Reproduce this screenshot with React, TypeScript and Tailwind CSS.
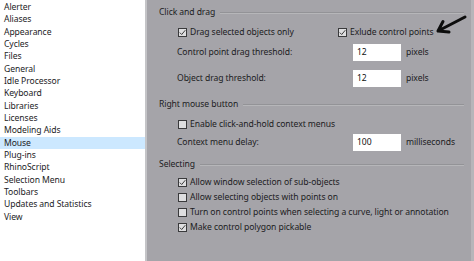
import React from 'react';

const pages = [
  'Alerter',
  'Aliases',
  'Appearance',
  'Cycles',
  'Files',
  'General',
  'Idle Processor',
  'Keyboard',
  'Libraries',
  'Licenses',
  'Modeling Aids',
  'Mouse',
  'Plug-ins',
  'RhinoScript',
  'Selection Menu',
  'Toolbars',
  'Updates and Statistics',
  'View',
];

function Check({ on }: { on: boolean }) {
  return (
    <span className="w-[9px] h-[9px] shrink-0 border border-[#3a3a3c] bg-[#dedee0] flex items-center justify-center">
      {on && (
        <svg width="7" height="7" viewBox="0 0 7 7" fill="none">
          <path d="M0.8 3.6 L2.7 5.5 L6.3 1.2" stroke="#2a2a2a" strokeWidth="0.9" />
        </svg>
      )}
    </span>
  );
}

function CheckRow({ on, label, className = '' }: { on: boolean; label: string; className?: string }) {
  return (
    <div className={`flex items-center gap-[3px] ${className}`}>
      <Check on={on} />
      <span>{label}</span>
    </div>
  );
}

function Header({ title, className = '' }: { title: string; className?: string }) {
  return (
    <div className={`h-[13px] flex items-center gap-[5px] pl-[12px] pr-[7px] ${className}`}>
      <span>{title}</span>
      <div className="flex-1 flex flex-col">
        <div className="h-px bg-[#939397]" />
        <div className="h-px bg-[#b6b6b9]" />
      </div>
    </div>
  );
}

function FieldRow({ label, value, unit, className = '' }: { label: string; value: string; unit: string; className?: string }) {
  return (
    <div className={`h-[17px] flex items-center pl-[30px] ${className}`}>
      <span className="w-[176px]">{label}</span>
      <div className="w-[48px] h-[17px] bg-white flex items-center pl-[4px] text-[#111]">{value}</div>
      <span className="ml-[5px]">{unit}</span>
    </div>
  );
}

export default function App() {
  return (
    <div
      className="w-[474px] h-[261px] flex overflow-hidden text-[8.6px] tracking-[-0.08px] text-[#1c1c1e] leading-none"
      style={{ fontFamily: '"Noto Sans", "Open Sans", sans-serif' }}
    >
      {/* 左侧列表 */}
      <div className="w-[145px] bg-white flex flex-col pt-px">
        {pages.map(p => (
          <div
            key={p}
            className={`h-[12.35px] flex items-center pl-[4px] ${p === 'Mouse' ? 'bg-[#cce8ff]' : ''}`}
          >
            {p}
          </div>
        ))}
      </div>
      <div className="w-[2px] bg-[#c4c4c7]" />

      {/* 右侧设置 */}
      <div className="relative flex-1 bg-[#a5a4a9] flex flex-col pt-[6px]">
        <Header title="Click and drag" />
        <div className="h-[13px] mt-[7px] flex items-center pl-[31px]">
          <CheckRow on label="Drag selected objects only" className="w-[160px]" />
          <CheckRow on label="Exlude control points" />
        </div>
        <FieldRow className="mt-[5px]" label="Control point drag threshold:" value="12" unit="pixels" />
        <FieldRow className="mt-[9px]" label="Object drag threshold:" value="12" unit="pixels" />

        <Header className="mt-[11px]" title="Right mouse button" />
        <div className="h-[13px] mt-[7px] flex items-center pl-[31px]">
          <CheckRow on={false} label="Enable click-and-hold context menus" />
        </div>
        <FieldRow className="mt-[3px]" label="Context menu delay:" value="100" unit="milliseconds" />

        <Header className="mt-[7px]" title="Selecting" />
        <div className="flex flex-col mt-[4px] pl-[31px]">
          <CheckRow on label="Allow window selection of sub-objects" className="h-[15px]" />
          <CheckRow on={false} label="Allow selecting objects with points on" className="h-[15px]" />
          <CheckRow on={false} label="Turn on control points when selecting a curve, light or annotation" className="h-[15px]" />
          <CheckRow on label="Make control polygon pickable" className="h-[15px]" />
        </div>

        {/* 标注箭头 */}
        <svg className="absolute left-[288px] top-[13px]" width="34" height="25" viewBox="0 0 34 25" fill="none">
          <path d="M30 4 L3 18 M8 8.5 L3 18 L14 19" stroke="#0d0d0d" strokeWidth="3" strokeLinecap="round" strokeLinejoin="round" />
        </svg>
      </div>
      <div className="w-[3px] bg-[#b6b5b9]" />
    </div>
  );
}
